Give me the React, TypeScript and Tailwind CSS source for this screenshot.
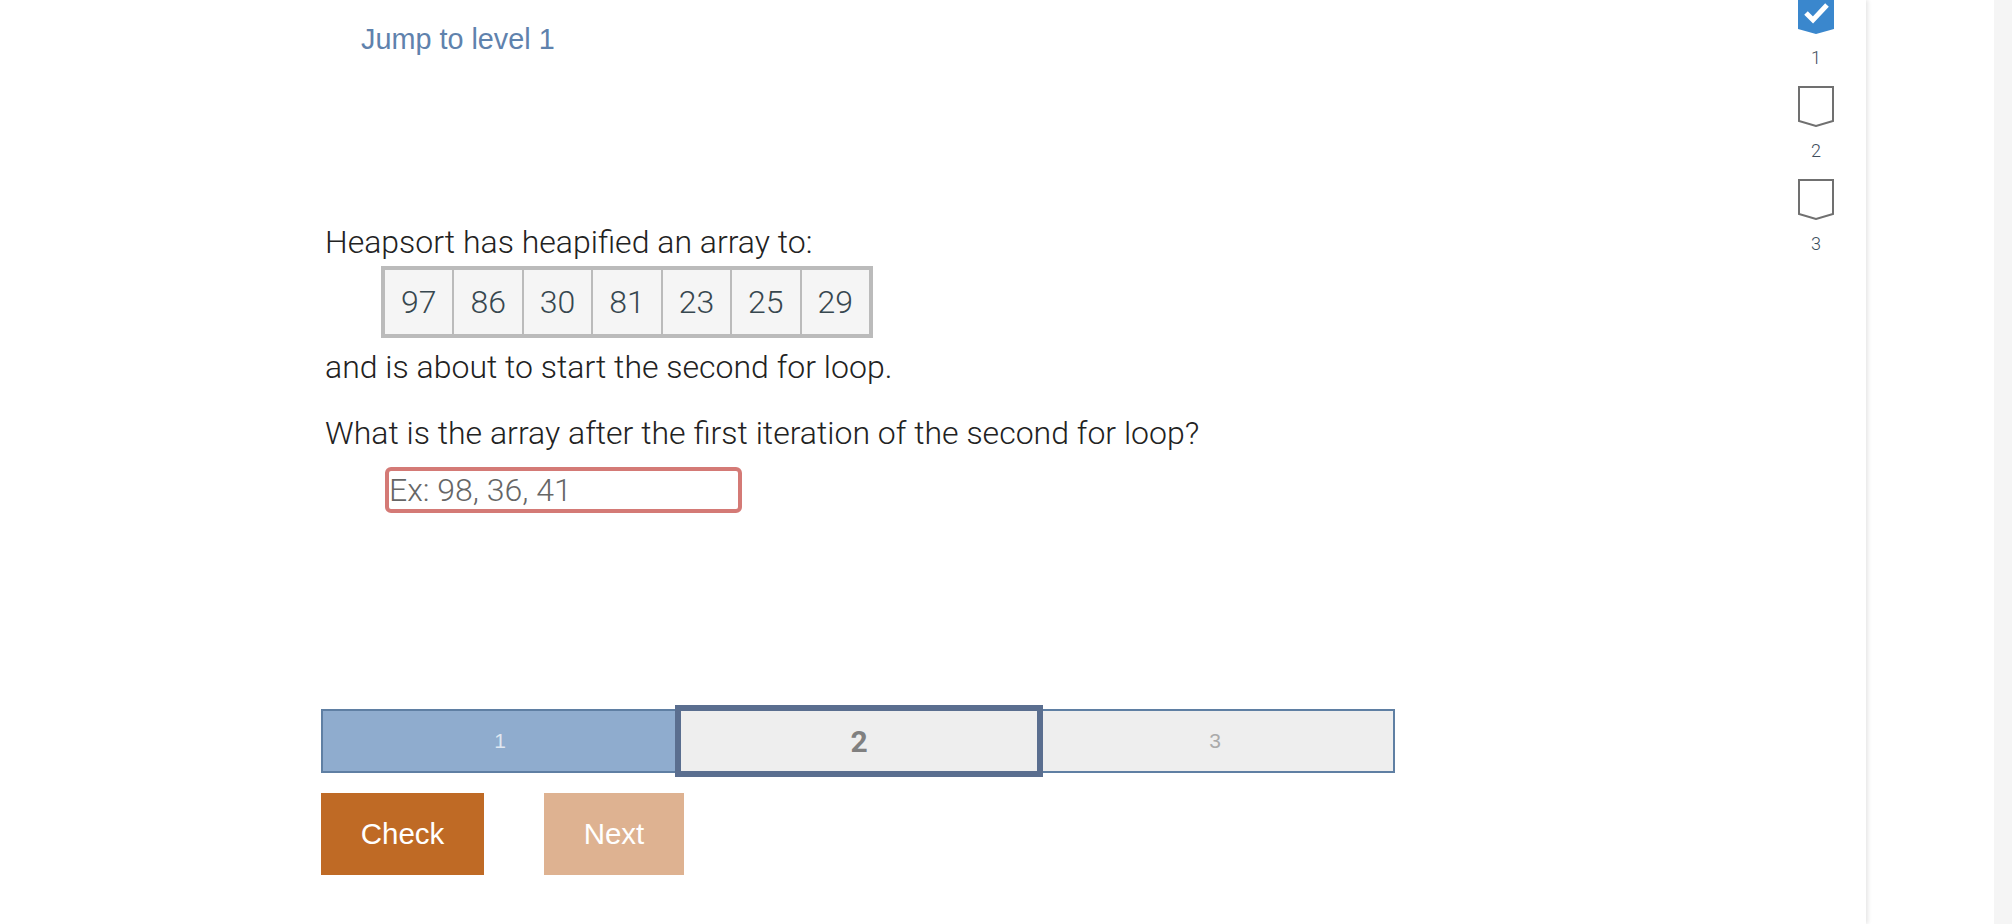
const cells = [97, 86, 30, 81, 23, 25, 29];

function Shield({ done }: { done?: boolean }) {
  return (
    <svg width="36" height="41" viewBox="0 0 36 41" className="block">
      {done ? (
        <>
          <path d="M0 0H36V36L18 41L0 36Z" fill="#3a87cd" />
          <path d="M8 20L15 27L29 12" fill="none" stroke="#fff" strokeWidth="5" />
        </>
      ) : (
        <path d="M1 1H35V35L18 40L1 35Z" fill="#fff" stroke="#707070" strokeWidth="2" />
      )}
    </svg>
  );
}

function LevelNav() {
  return (
    <div className="mt-[-7px] flex w-[36px] flex-col items-center font-['Roboto',sans-serif] text-[18px] font-light leading-[21px] text-[#3d4d5c]">
      <Shield done />
      <span className="mt-[13px]">1</span>
      <div className="mt-[18px]">
        <Shield />
      </div>
      <span className="mt-[13px]">2</span>
      <div className="mt-[18px]">
        <Shield />
      </div>
      <span className="mt-[13px]">3</span>
    </div>
  );
}

export default function App() {
  return (
    <div className="flex h-[924px] w-[2012px] overflow-hidden bg-white">
      <div className="relative z-10 flex w-[1866px] shrink-0 bg-white shadow-[2px_0_4px_rgba(0,0,0,0.1)]">
        <main className="w-[1798px] shrink-0 pl-[321px]">
          <a className="ml-[40px] block pt-[22px] font-['Liberation_Sans',sans-serif] text-[28.8px] leading-[34px] text-[#5f82ad]">
            Jump to level 1
          </a>

          <div className="mt-[167px] font-['Roboto',sans-serif] text-[32px] font-light text-[#222]">
            <p className="ml-[4px] leading-[38px]">Heapsort has heapified an array to:</p>
            <div className="ml-[60px] mt-[5px] flex h-[72px] w-[492px] border-4 border-[#bbb] bg-[#f5f5f5] text-[#37474f]">
              {cells.map((n, i) => (
                <div
                  key={n}
                  className={`flex flex-1 items-center justify-center ${i > 0 ? "border-l-2 border-[#bbb]" : ""}`}
                >
                  {n}
                </div>
              ))}
            </div>
            <p className="ml-[4px] mt-[10px] leading-[38px]">and is about to start the second for loop.</p>
            <p className="ml-[4px] mt-[28px] leading-[38px]">What is the array after the first iteration of the second for loop?</p>
            <input
              readOnly
              placeholder="Ex: 98, 36, 41"
              className="ml-[64px] mt-[15px] block h-[46px] w-[357px] rounded-[6px] border-4 border-[#d47a76] bg-white px-0 text-[32px] font-light outline-none placeholder:text-[#666]"
            />
          </div>

          <div className="mt-[192px] flex h-[72px] w-[1074px] items-center">
            <div className="flex h-[64px] w-[354px] items-center justify-center border-2 border-r-0 border-[#5f7fa3] bg-[#8facce] pl-[2px] font-['Liberation_Sans',sans-serif] text-[21px] text-[#dfe7f1]">
              1
            </div>
            <div className="flex h-[72px] w-[368px] items-center justify-center border-[6px] border-[#5a6e8f] bg-[#eee] font-['Roboto',sans-serif] text-[30px] font-bold text-[#808080]">
              2
            </div>
            <div className="flex h-[64px] w-[352px] items-center justify-center border-2 border-l-0 border-[#5f7fa3] bg-[#eee] pr-[6px] font-['Liberation_Sans',sans-serif] text-[21px] text-[#aaa]">
              3
            </div>
          </div>

          <div className="mt-[16px] flex gap-[60px] font-['Liberation_Sans',sans-serif] text-[29.5px] text-white">
            <button className="h-[82px] w-[163px] bg-[#bf6a25]">Check</button>
            <button className="h-[82px] w-[140px] bg-[#deb291]">Next</button>
          </div>
        </main>
        <LevelNav />
      </div>
      <aside className="h-full w-[128px] shrink-0 bg-white shadow-[2px_0_4px_rgba(0,0,0,0.1)]" />
      <div className="flex-1 bg-[#f5f5f5]" />
    </div>
  );
}
